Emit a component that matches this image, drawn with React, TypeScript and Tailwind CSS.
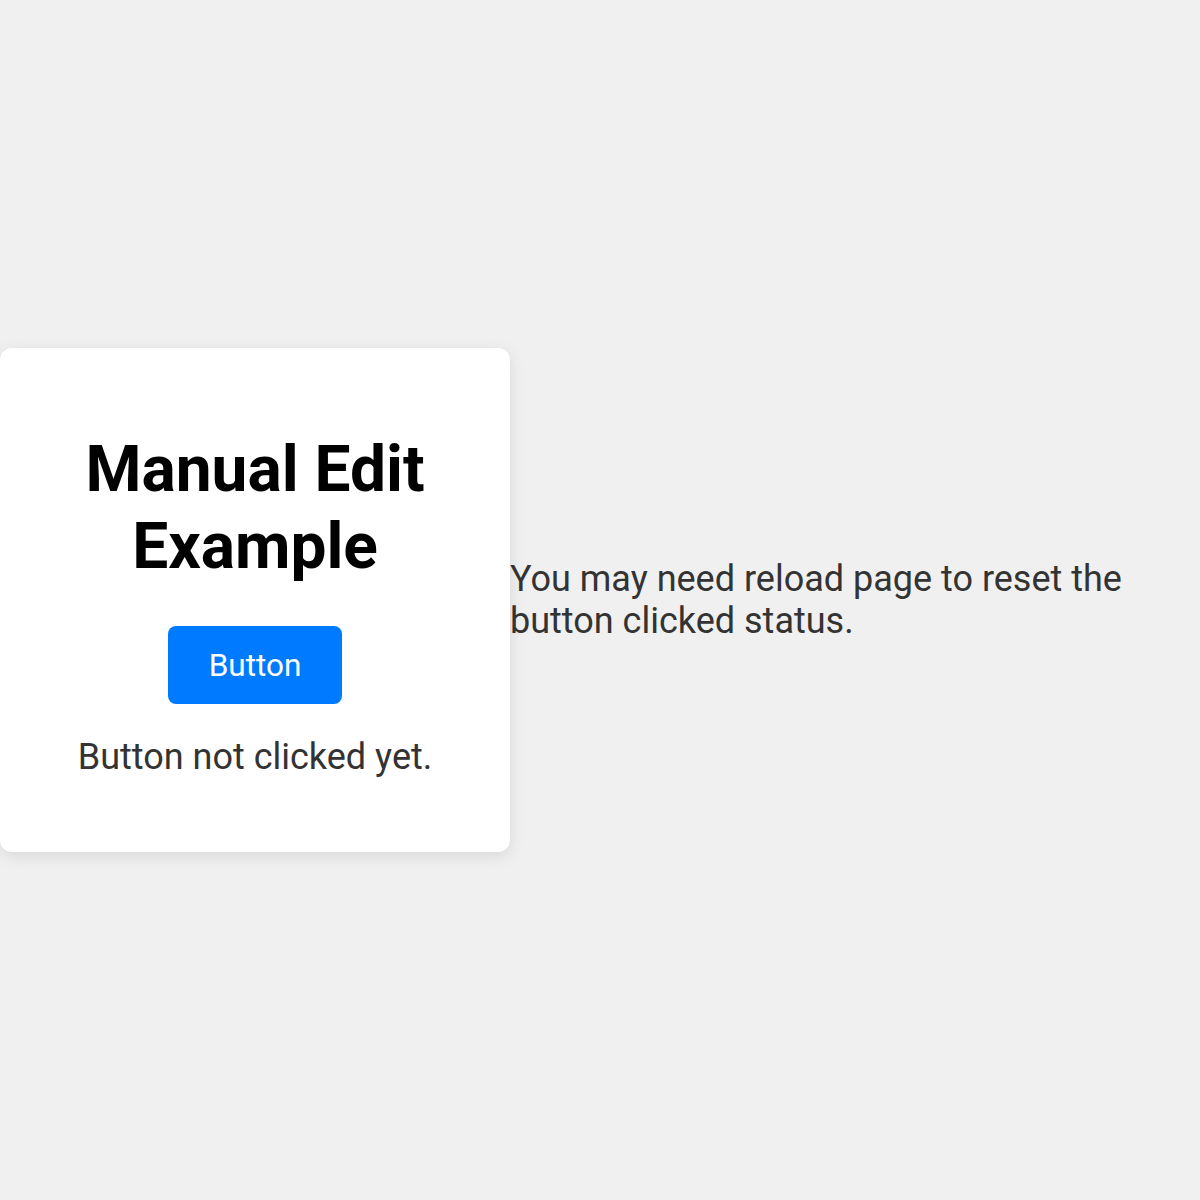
import { useState } from "react";

const App = () => {
  const [clicked, setClicked] = useState(false);

  return (
    <div
      className="min-h-[1200px] w-full bg-[#f0f0f0] flex items-center"
      style={{ fontFamily: "Roboto, 'Noto Sans', sans-serif" }}
    >
      <div className="w-[510px] shrink-0 bg-white rounded-[12px] shadow-[0_4px_16px_rgba(0,0,0,0.1)] flex flex-col items-center pt-[84px] pb-[74px]">
        <h1 className="text-[64px] leading-[1.2] font-bold text-black text-center">
          Manual Edit
          <br />
          Example
        </h1>
        <button
          type="button"
          onClick={() => setClicked(true)}
          className="mt-[40px] h-[78px] w-[174px] pt-[3px] rounded-[8px] bg-[#007bff] text-white text-[31.5px] leading-none"
        >
          Button
        </button>
        <p className="mt-[32px] text-[36px] leading-[1.172] text-[#333]">
          {clicked ? "Button clicked!" : "Button not clicked yet."}
        </p>
      </div>
      <p className="flex-1 text-[36px] leading-[1.172] text-[#333]">
        You may need reload page to reset the button clicked status.
      </p>
    </div>
  );
};

export default App;
